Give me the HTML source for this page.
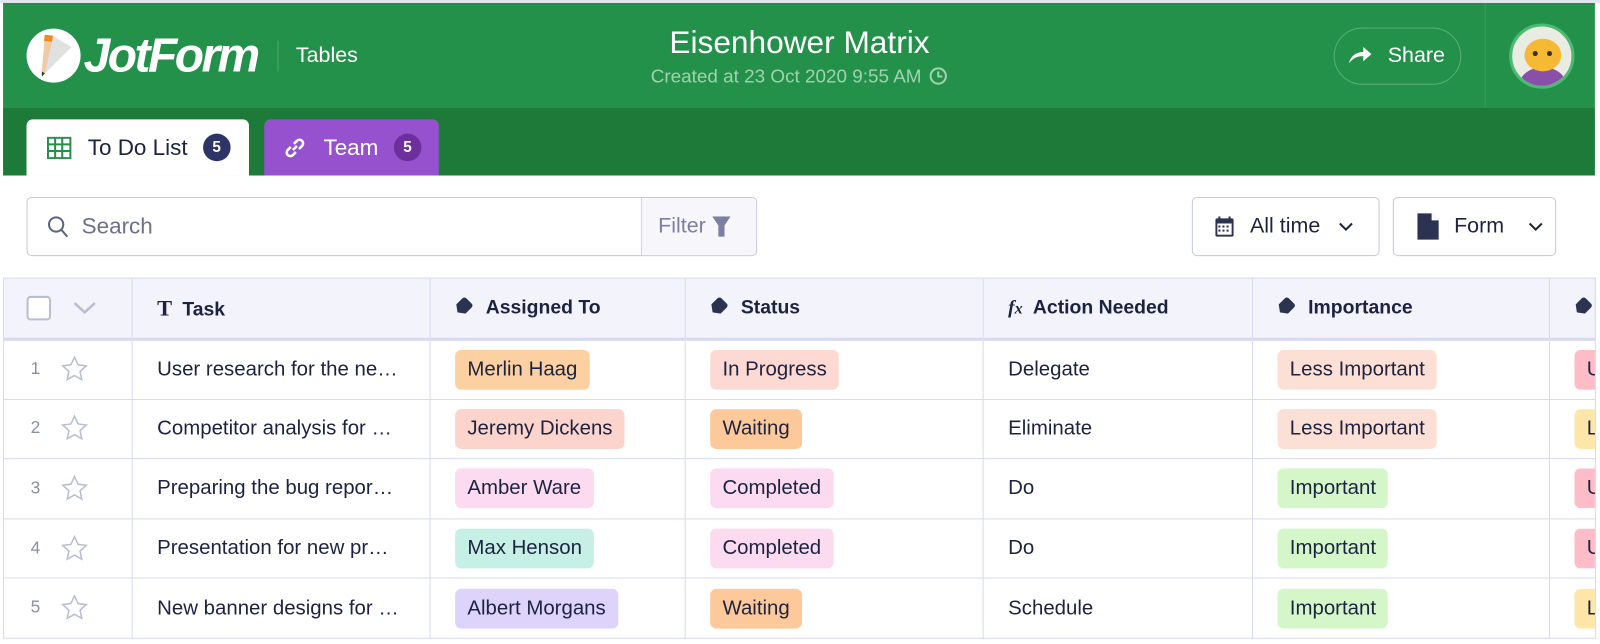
<!DOCTYPE html><html><head><meta charset="utf-8"><style>
*{box-sizing:border-box;margin:0;padding:0}
body{width:1600px;height:643px;background:#fff;font-family:"Liberation Sans",sans-serif;overflow:hidden;color:#1c2340}
#w{position:relative;width:1568px;height:631px;transform:scale(1.020408);transform-origin:0 0;overflow:hidden}
.abs{position:absolute}
.hdr{left:3px;top:3px;width:1560px;height:102px;background:#24914b;border-top:1px solid #1f8a45}
.tabbar{left:3px;top:105px;width:1560px;height:67px;background:#1e7a39}
.tab{top:117px;height:55px;border-radius:6px 6px 0 0;display:flex;align-items:center;font-size:22px}
.badge{width:27px;height:27px;border-radius:50%;font-size:15px;font-weight:bold;color:#fff;display:flex;align-items:center;justify-content:center}
.btn{border:1px solid #c4c8dc;border-radius:5px;display:flex;align-items:center;font-size:21px;background:#fff}
table{position:absolute;left:3px;top:272px;border-collapse:collapse;table-layout:fixed;width:1560px}
td{border:1px solid #d7daf0;height:58.6px;font-size:20px;padding:0 0 0 24px;white-space:nowrap;overflow:hidden}
tr.h td{background:#f2f3fb;height:60px;font-size:19px;font-weight:bold;color:#1c2340;border-bottom:3px solid #d7daf0}
.p{display:inline-block;padding:9px 12px;border-radius:6px;line-height:21px}
.n{color:#8a8fa8;font-size:17px;padding-left:26px}
.tag{display:inline-block;width:16px;height:13px;background:#2c3350;border-radius:2px 3px 3px 2px;transform:rotate(-45deg);margin-right:14px;clip-path:polygon(0 50%,30% 0,100% 0,100% 100%,30% 100%)}
.cl{width:30px;overflow:hidden}
</style></head><body><div id="w">
<div class="abs" style="left:0;top:0;width:1600px;height:3px;background:#e3e5ee"></div>
<div class="abs hdr"></div>
<div class="abs tabbar"></div>
<div class="abs" style="left:26px;top:28px;width:53px;height:53px;border-radius:50%;background:#fff"></div>
<svg class="abs" style="left:26px;top:26px" width="56" height="56" viewBox="0 0 56 56"><path d="M24 8 L44 20 L18 46 Z" fill="#e0e0e0"/><path d="M18 8 L26 9 L18 46 L15 44 Z" fill="#f2c9a0"/><path d="M18 8 L26 9 L25 15 L17 14Z" fill="#ef8a2a"/><path d="M15 44 L18 46 L15 49Z" fill="#333"/></svg>
<div class="abs" style="left:82px;top:26px;font-size:47px;font-weight:bold;font-style:italic;color:#fff;letter-spacing:-2.5px">JotForm</div>
<div class="abs" style="left:272px;top:40px;width:1px;height:30px;background:#4aa86a"></div>
<div class="abs" style="left:290px;top:43px;font-size:21px;color:#fff">Tables</div>
<div class="abs" style="left:0;width:1567px;top:24px;text-align:center;font-size:31px;color:#fff">Eisenhower Matrix</div>
<div class="abs" style="left:0;width:1567px;top:64px;text-align:center;font-size:18.5px;color:#9fd2ae">Created at 23 Oct 2020 9:55 AM <svg width="19" height="19" style="vertical-align:-3px;margin-left:2px"><circle cx="9.5" cy="9.5" r="7.5" fill="none" stroke="#9fd2ae" stroke-width="2"/><path d="M9.5 5v5h4" stroke="#9fd2ae" stroke-width="2" fill="none"/></svg></div>
<div class="abs" style="left:1307px;top:27px;width:125px;height:56px;border:1px solid #55ad73;border-radius:28px;color:#fff;font-size:21px;display:flex;align-items:center;padding-left:52px">Share</div>
<svg class="abs" style="left:1320px;top:44px" width="26" height="20"><path d="M2 18 C4 10 10 7 16 7 V2 L24 9 L16 16 V11 C10 11 6 13 2 18Z" fill="#fff"/></svg>
<div class="abs" style="left:1455px;top:3px;width:1px;height:102px;background:#3a9d5c"></div>
<div class="abs" style="left:1479px;top:23px;width:64px;height:64px;border-radius:50%;background:#e9ece3;border:3px solid #4cba72;overflow:hidden">
<div style="position:absolute;left:8px;top:40px;width:44px;height:30px;border-radius:50%;background:#8a4fa8"></div>
<div style="position:absolute;left:12px;top:12px;width:36px;height:32px;border-radius:50%;background:#f6b933"></div>
<div style="position:absolute;left:20px;top:24px;width:5px;height:5px;border-radius:50%;background:#333"></div>
<div style="position:absolute;left:34px;top:24px;width:5px;height:5px;border-radius:50%;background:#333"></div></div>
<div class="abs tab" style="left:26px;width:218px;background:#fff;padding-left:20px;color:#1c2340">
<svg width="24" height="22" style="margin-right:16px"><rect x="1" y="1" width="22" height="20" fill="none" stroke="#24914b" stroke-width="2"/><path d="M8 1v20M15 1v20M1 7.5h22M1 14h22" stroke="#24914b" stroke-width="2"/></svg>To Do List<div class="badge" style="background:#2c3566;margin-left:15px">5</div></div>
<div class="abs tab" style="left:259px;width:171px;background:#9651cf;padding-left:18px;color:#fff">
<svg width="24" height="24" style="margin-right:16px" fill="none" stroke="#fff" stroke-width="2.5"><path d="M10 14l4-4M8 11l-3 3a3.5 3.5 0 005 5l3-3M16 13l3-3a3.5 3.5 0 00-5-5l-3 3"/></svg>Team<div class="badge" style="background:#6c2f9c;margin-left:15px">5</div></div>
<div class="abs btn" style="left:26px;top:193px;width:716px;height:58px">
<svg style="margin:0 12px 0 19px" width="22" height="22" fill="none" stroke="#5d6582" stroke-width="2"><circle cx="9" cy="9" r="7"/><path d="M14 14l6 7"/></svg><span style="color:#6c7189;font-size:22px">Search</span>
<div style="margin-left:auto;width:113px;height:56px;border-left:1px solid #c4c8dc;background:#f6f6fb;display:flex;align-items:center;padding-left:16px;color:#7b7fa2;border-radius:0 5px 5px 0">Filter<svg width="18" height="20" style="margin-left:6px"><path d="M0 0h18l-6 9v11h-6V9Z" fill="#7b7fa2"/></svg></div></div>
<div class="abs btn" style="left:1168px;top:193px;width:184px;height:58px;padding-left:22px;color:#1c2340">
<svg width="18" height="20" style="margin-right:16px"><rect x="0" y="2" width="18" height="18" rx="2" fill="#2c3350"/><rect x="2" y="7" width="14" height="11" fill="#fff"/><path d="M3 9h2v2H3zM7 9h2v2H7zM11 9h2v2h-2zM3 13h2v2H3zM7 13h2v2H7zM11 13h2v2h-2z" fill="#2c3350"/><path d="M4 0v4M14 0v4" stroke="#2c3350" stroke-width="2"/></svg>All time<svg width="14" height="9" style="margin-left:18px"><path d="M1 1l6 6 6-6" stroke="#1c2340" stroke-width="2" fill="none"/></svg></div>
<div class="abs btn" style="left:1365px;top:193px;width:160px;height:58px;padding-left:23px;color:#1c2340">
<svg width="21" height="26" style="margin-right:15px"><path d="M0 0h14l7 7v19H0Z" fill="#2c3350"/><path d="M14 0v7h7" fill="#fff"/></svg>Form<svg width="14" height="9" style="margin-left:24px"><path d="M1 1l6 6 6-6" stroke="#1c2340" stroke-width="2" fill="none"/></svg></div>
<table>
<colgroup><col style="width:126px"><col style="width:292px"><col style="width:250px"><col style="width:292px"><col style="width:264px"><col style="width:291px"><col style="width:45px"></colgroup>
<tr class="h"><td style="padding-left:22px"><span style="display:inline-block;width:24px;height:24px;border:2px solid #b9bdd3;border-radius:4px;vertical-align:middle;background:#fff"></span><svg width="22" height="12" style="margin-left:22px;vertical-align:middle"><path d="M1 1l10 9 10-9" stroke="#b9bdd3" stroke-width="2.5" fill="none"/></svg></td>
<td><span style="font-family:'Liberation Serif',serif;font-size:22px;margin-right:10px">T</span>Task</td>
<td><span class="tag"></span>Assigned To</td><td><span class="tag"></span>Status</td>
<td><i style="font-family:'Liberation Serif',serif;margin-right:10px">f<small>x</small></i>Action Needed</td>
<td><span class="tag"></span>Importance</td><td><span class="tag"></span></td></tr>
<tr><td class="n">1<svg width="28" height="28" style="margin-left:20px;vertical-align:middle"><path d="M14 2l3.5 7.5 8 1-6 5.5 1.6 8L14 20l-7.1 4 1.6-8-6-5.5 8-1Z" fill="none" stroke="#b9bdd3" stroke-width="1.5"/></svg></td><td>User research for the ne…</td><td><span class="p" style="background:#fdd0a2">Merlin Haag</span></td><td><span class="p" style="background:#fdd9d3">In Progress</span></td><td>Delegate</td><td><span class="p" style="background:#fde0d5">Less Important</span></td><td><div class="cl"><span class="p" style="background:#fdbcc8">Urgent</span></div></td></tr>
<tr><td class="n">2<svg width="28" height="28" style="margin-left:20px;vertical-align:middle"><path d="M14 2l3.5 7.5 8 1-6 5.5 1.6 8L14 20l-7.1 4 1.6-8-6-5.5 8-1Z" fill="none" stroke="#b9bdd3" stroke-width="1.5"/></svg></td><td>Competitor analysis for …</td><td><span class="p" style="background:#fdd4cc">Jeremy Dickens</span></td><td><span class="p" style="background:#fdc99a">Waiting</span></td><td>Eliminate</td><td><span class="p" style="background:#fde0d5">Less Important</span></td><td><div class="cl"><span class="p" style="background:#fde6a8">Less Urgent</span></div></td></tr>
<tr><td class="n">3<svg width="28" height="28" style="margin-left:20px;vertical-align:middle"><path d="M14 2l3.5 7.5 8 1-6 5.5 1.6 8L14 20l-7.1 4 1.6-8-6-5.5 8-1Z" fill="none" stroke="#b9bdd3" stroke-width="1.5"/></svg></td><td>Preparing the bug repor…</td><td><span class="p" style="background:#fcdaf0">Amber Ware</span></td><td><span class="p" style="background:#fcdaf0">Completed</span></td><td>Do</td><td><span class="p" style="background:#d5f6c9">Important</span></td><td><div class="cl"><span class="p" style="background:#fdbcc8">Urgent</span></div></td></tr>
<tr><td class="n">4<svg width="28" height="28" style="margin-left:20px;vertical-align:middle"><path d="M14 2l3.5 7.5 8 1-6 5.5 1.6 8L14 20l-7.1 4 1.6-8-6-5.5 8-1Z" fill="none" stroke="#b9bdd3" stroke-width="1.5"/></svg></td><td>Presentation for new pr…</td><td><span class="p" style="background:#c6f0e6">Max Henson</span></td><td><span class="p" style="background:#fcdaf0">Completed</span></td><td>Do</td><td><span class="p" style="background:#d5f6c9">Important</span></td><td><div class="cl"><span class="p" style="background:#fdbcc8">Urgent</span></div></td></tr>
<tr><td class="n">5<svg width="28" height="28" style="margin-left:20px;vertical-align:middle"><path d="M14 2l3.5 7.5 8 1-6 5.5 1.6 8L14 20l-7.1 4 1.6-8-6-5.5 8-1Z" fill="none" stroke="#b9bdd3" stroke-width="1.5"/></svg></td><td>New banner designs for …</td><td><span class="p" style="background:#ded4fb">Albert Morgans</span></td><td><span class="p" style="background:#fdc99a">Waiting</span></td><td>Schedule</td><td><span class="p" style="background:#d5f6c9">Important</span></td><td><div class="cl"><span class="p" style="background:#fde6a8">Less Urgent</span></div></td></tr>
</table>
</div></body></html>
